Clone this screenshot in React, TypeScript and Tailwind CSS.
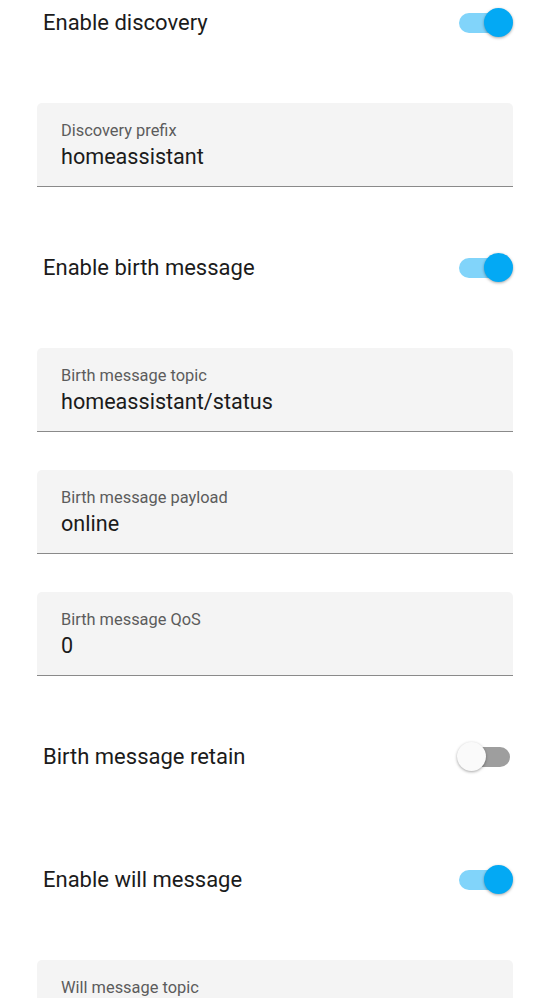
import React from "react";

type Item =
  | { kind: "toggle"; label: string; on: boolean }
  | { kind: "field"; label: string; value: string };

const items: Item[] = [
  { kind: "toggle", label: "Enable discovery", on: true },
  { kind: "field", label: "Discovery prefix", value: "homeassistant" },
  { kind: "toggle", label: "Enable birth message", on: true },
  { kind: "field", label: "Birth message topic", value: "homeassistant/status" },
  { kind: "field", label: "Birth message payload", value: "online" },
  { kind: "field", label: "Birth message QoS", value: "0" },
  { kind: "toggle", label: "Birth message retain", on: false },
  { kind: "toggle", label: "Enable will message", on: true },
  { kind: "field", label: "Will message topic", value: "homeassistant/status" },
];

function Switch({ on }: { on: boolean }) {
  return (
    <div className="relative w-[57px] h-[30px] flex items-center">
      <div
        className={`ml-[3px] w-[51px] h-[20px] rounded-full ${
          on ? "bg-[#81d4fa]" : "bg-[#9e9e9e]"
        }`}
      />
      <div
        className={`absolute top-[0.5px] w-[29px] h-[29px] rounded-full shadow-[0_1px_3px_rgba(0,0,0,0.35)] ${
          on ? "right-0 bg-[#03a9f4]" : "left-[1px] bg-[#fafafa]"
        }`}
      />
    </div>
  );
}

function ToggleRow({ label, on }: { label: string; on: boolean }) {
  return (
    <div className="h-[85px] flex items-center justify-between pl-[43px] pr-[37px]">
      <span className="text-[22px] text-[#1b1b1b]">{label}</span>
      <Switch on={on} />
    </div>
  );
}

function TextField({ label, value }: { label: string; value: string }) {
  return (
    <div className="mx-[37px] h-[84px] bg-[#f4f4f4] rounded-t-[5px] border-b border-[#8a8a8a] px-[24px] pt-[18px]">
      <div className="text-[16.4px] leading-[20px] text-[#5c5c5c]">{label}</div>
      <div className="mt-[2px] text-[21.6px] leading-[28px] text-[#1b1b1b]">{value}</div>
    </div>
  );
}

export default function App() {
  return (
    <div
      className="bg-white min-h-screen overflow-hidden"
      style={{ fontFamily: "Roboto, 'Noto Sans', sans-serif" }}
    >
      <div className="-mt-[20px] flex flex-col gap-[38px]">
        {items.map((item, i) =>
          item.kind === "toggle" ? (
            <ToggleRow key={i} label={item.label} on={item.on} />
          ) : (
            <TextField key={i} label={item.label} value={item.value} />
          )
        )}
      </div>
    </div>
  );
}
